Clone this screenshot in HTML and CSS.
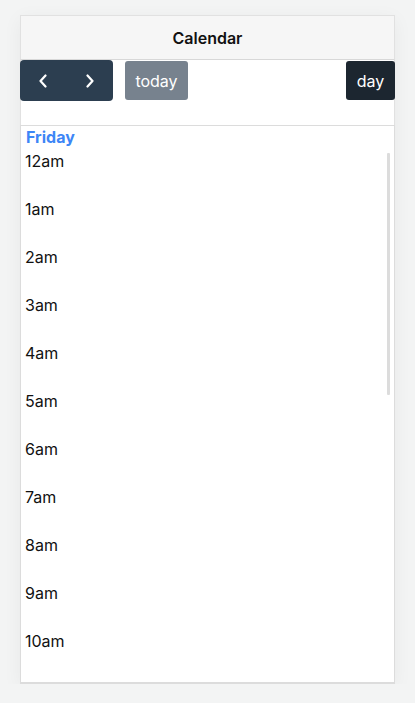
FILE: index.html
```html
<!DOCTYPE html>
<html>
<head>
<meta charset="utf-8">
<link rel="stylesheet" href="styles.css">
</head>
<body>
<div class="card">
  <header class="header">Calendar</header>
  <div class="toolbar">
    <div class="nav-group">
      <button class="nav-btn" aria-label="prev">
        <svg width="10" height="14" viewBox="0 0 10 14"><path d="M7.5 1.5 L2.5 7 L7.5 12.5" fill="none" stroke="#fff" stroke-width="2.2" stroke-linecap="round" stroke-linejoin="round"/></svg>
      </button>
      <button class="nav-btn" aria-label="next">
        <svg width="10" height="14" viewBox="0 0 10 14"><path d="M2.5 1.5 L7.5 7 L2.5 12.5" fill="none" stroke="#fff" stroke-width="2.2" stroke-linecap="round" stroke-linejoin="round"/></svg>
      </button>
    </div>
    <button class="btn btn-today">today</button>
    <div class="spacer"></div>
    <button class="btn btn-day">day</button>
  </div>
  <div class="view">
    <div class="day-title">Friday</div>
    <div class="scroller">
      <div class="hours">
        <div class="hour">12am</div>
        <div class="hour">1am</div>
        <div class="hour">2am</div>
        <div class="hour">3am</div>
        <div class="hour">4am</div>
        <div class="hour">5am</div>
        <div class="hour">6am</div>
        <div class="hour">7am</div>
        <div class="hour">8am</div>
        <div class="hour">9am</div>
        <div class="hour">10am</div>
      </div>
      <div class="thumb"></div>
    </div>
  </div>
</div>
</body>
</html>
```
FILE: styles.css
```css
* { box-sizing: border-box; }
html, body {
  margin: 0;
  padding: 0;
  background: #f3f4f4;
  font-family: Inter, "Noto Sans", "Liberation Sans", sans-serif;
  color: #111;
}
body { padding: 15px 20px 0 20px; }
.card {
  width: 375px;
  height: 669px;
  background: #fff;
  box-shadow: inset 0 0 0 1px #e1e1e1, 0 4px 18px rgba(0,0,0,0.05);
  display: flex;
  flex-direction: column;
}
.header {
  height: 45px;
  background: #f6f6f6;
  border: 1px solid #e1e1e1;
  border-bottom: 1px solid #d8d8d8;
  display: flex;
  align-items: center;
  justify-content: center;
  font-size: 16px;
  font-weight: 600;
  color: #111;
  flex: none;
}
.toolbar {
  height: 65px;
  display: flex;
  align-items: flex-start;
  flex: none;
  border-left: 1px solid #e1e1e1;
  border-right: 1px solid #e1e1e1;
}
.nav-group {
  margin-left: -1px;
  display: flex;
  width: 93px;
  height: 41px;
  background: #2c3e50;
  border-radius: 4px;
  overflow: hidden;
}
.nav-btn {
  flex: 1;
  border: none;
  background: transparent;
  padding: 0;
  display: flex;
  align-items: center;
  justify-content: center;
}
.btn {
  margin-top: 1px;
  height: 39px;
  border: none;
  border-radius: 3px;
  color: #fff;
  font-family: inherit;
  font-size: 16px;
  padding: 0;
}
.btn-today {
  margin-left: 12px;
  width: 63px;
  background: #77828e;
}
.spacer { flex: 1; }
.btn-day {
  width: 49px;
  margin-right: -1px;
  background: #1c2630;
}
.view {
  flex: 1;
  border: 1px solid #dcdcdc;
  border-bottom: 2px solid #dcdcdc;
  display: flex;
  flex-direction: column;
  min-height: 0;
}
.day-title {
  flex: none;
  height: 23px;
  padding-left: 5px;
  padding-top: 0;
  font-size: 16px;
  line-height: 22px;
  font-weight: 700;
  color: #3d86f6;
}
.scroller {
  flex: 1;
  position: relative;
  overflow: hidden;
}
.hours { padding-left: 4px; padding-top: 2px; }
.hour {
  height: 48px;
  font-size: 16px;
  line-height: 20px;
  color: #111;
}
.thumb {
  position: absolute;
  right: 4px;
  top: 4px;
  width: 3px;
  height: 242px;
  background: #dcdcdc;
  border-radius: 1px;
}
```
